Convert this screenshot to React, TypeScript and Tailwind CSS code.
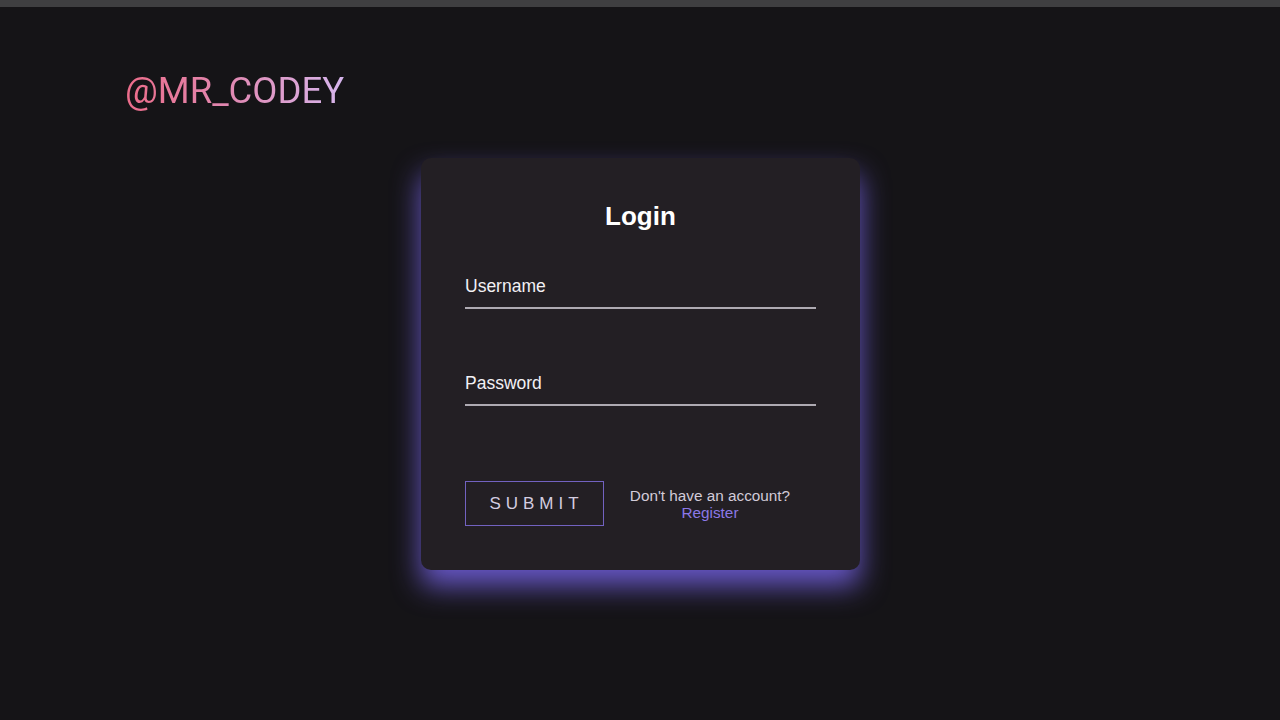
export default function App() {
  return (
    <div className="min-h-screen w-full bg-[#151417] font-['Liberation_Sans',Arial,sans-serif]">
      {/* browser strip */}
      <div className="h-[7px] w-full bg-[#3f3f41]" />

      <div className="pl-[125px] pt-[63px]">
        <h1 className="inline-block bg-gradient-to-r from-[#ec6c8a] via-[#e08ab4] to-[#d6b6ee] bg-clip-text font-['Roboto',sans-serif] text-[36.5px] font-normal leading-[42px] text-transparent">
          @MR_CODEY
        </h1>
      </div>

      <div className="mt-[46px] flex justify-center pl-px">
        <form
          onSubmit={(e) => e.preventDefault()}
          className="w-[439px] rounded-[10px] bg-[#231f24] px-[44px] pt-[44px] pb-[44px] shadow-[0_16px_28px_rgba(106,90,205,0.95)]"
        >
          <h2 className="text-center text-[26px] font-bold leading-[28px] text-white">Login</h2>

          <label className="mt-[46px] block border-b-2 border-[#aeaab2] pb-[11px]">
            <input
              type="text"
              placeholder="Username"
              className="block h-[20px] w-full bg-transparent text-[17.5px] leading-[20px] text-white outline-none placeholder:text-[#f2f0f4]"
            />
          </label>

          <label className="mt-[64px] block border-b-2 border-[#aeaab2] pb-[11px]">
            <input
              type="password"
              placeholder="Password"
              className="block h-[20px] w-full bg-transparent text-[17.5px] leading-[20px] text-white outline-none placeholder:text-[#f2f0f4]"
            />
          </label>

          <div className="mt-[75px] flex items-center">
            <button
              type="submit"
              className="h-[45px] w-[139px] border border-solid border-[#7262c0] pl-[4px] text-[17px] tracking-[5px] text-[#d4cde0]"
            >
              SUBMIT
            </button>
            <div className="flex-1 text-center text-[15.3px] leading-[17px] text-[#d2cbd9]">
              <p>Don't have an account?</p>
              <a href="#" className="text-[#8b78e6]">
                Register
              </a>
            </div>
          </div>
        </form>
      </div>
    </div>
  );
}
